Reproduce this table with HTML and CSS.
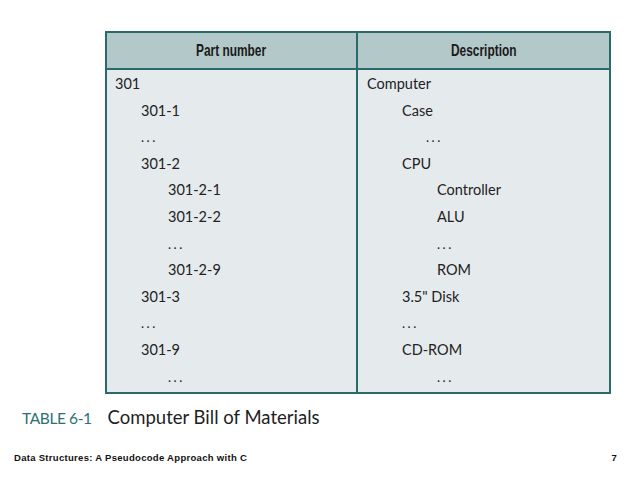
FILE: index.html
```html
<!DOCTYPE html>
<html>
<head>
<meta charset="utf-8">
<link rel="stylesheet" href="styles.css">
</head>
<body>
<div class="slide">
  <div class="bom">
    <div class="head">
      <div class="hcell"><span class="htext">Part number</span></div>
      <div class="hcell hright"><span class="htext">Description</span></div>
    </div>
    <div class="rows">
      <div class="col">
        <div class="ln l0">301</div>
        <div class="ln l1">301-1</div>
        <div class="ln l1 dots">...</div>
        <div class="ln l1">301-2</div>
        <div class="ln l2">301-2-1</div>
        <div class="ln l2">301-2-2</div>
        <div class="ln l2 dots">...</div>
        <div class="ln l2">301-2-9</div>
        <div class="ln l1">301-3</div>
        <div class="ln l1 dots">...</div>
        <div class="ln l1">301-9</div>
        <div class="ln l2 dots">...</div>
      </div>
      <div class="col cright">
        <div class="ln d0">Computer</div>
        <div class="ln d1">Case</div>
        <div class="ln d15 dots">...</div>
        <div class="ln d1">CPU</div>
        <div class="ln d2">Controller</div>
        <div class="ln d2">ALU</div>
        <div class="ln d2 dots">...</div>
        <div class="ln d2">ROM</div>
        <div class="ln d1">3.5" Disk</div>
        <div class="ln d1 dots">...</div>
        <div class="ln d1">CD-ROM</div>
        <div class="ln d2 dots">...</div>
      </div>
    </div>
  </div>
  <div class="caption"><span class="tag">TABLE 6-1</span><span class="title">Computer Bill of Materials</span></div>
  <div class="footer"><span>Data Structures: A Pseudocode Approach with C</span><span>7</span></div>
</div>
</body>
</html>
```
FILE: styles.css
```css
html, body { margin: 0; padding: 0; background: #ffffff; }
.slide { width: 638px; height: 478px; box-sizing: border-box; padding-top: 31px; overflow: hidden; font-family: "Lato", "Liberation Sans", sans-serif; color: #1e1e1e; }
.bom { margin: 0 0 0 105px; width: 502px; border: 2px solid #2b6a6a; background: #e5ebed; }
.head { display: grid; grid-template-columns: 249px 1fr; background: #b2c8c9; border-bottom: 2px solid #2b6a6a; height: 35px; }
.hcell { font-family: "Liberation Sans", sans-serif; font-weight: bold; font-size: 17px; display: flex; align-items: center; justify-content: center; color: #1a1a1a; padding-top: 1px; }
.htext { display: inline-block; transform: scaleX(0.7); }
.hright { border-left: 2px solid #2b6a6a; }
.rows { display: grid; grid-template-columns: 249px 1fr; }
.col { padding: 1px 0 2px 8px; }
.cright { border-left: 2px solid #2b6a6a; padding-left: 9px; }
.ln { font-size: 14.5px; line-height: 26.6px; height: 26.6px; white-space: nowrap; color: #222; }
.dots { letter-spacing: 2.5px; font-size: 13px; }
.l1 { padding-left: 26px; }
.l2 { padding-left: 53px; }
.d1 { padding-left: 35px; }
.d15 { padding-left: 59px; }
.d2 { padding-left: 70px; }
.caption { margin: 12px 0 0 22px; display: flex; align-items: baseline; gap: 16px; }
.tag { color: #2e7072; font-size: 15.5px; letter-spacing: -0.4px; }
.title { font-size: 18.5px; }
.footer { margin: 24px 0 0 14px; width: 603px; display: flex; justify-content: space-between; font-family: "Liberation Sans", Arial, sans-serif; font-weight: bold; font-size: 9.5px; letter-spacing: 0.3px; color: #111; }
```
